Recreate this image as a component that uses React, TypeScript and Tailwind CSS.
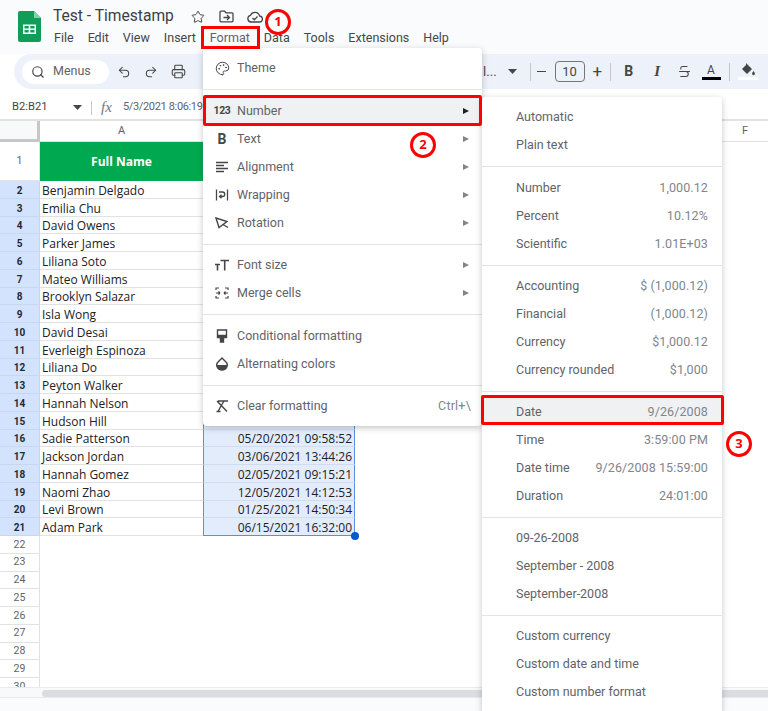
import { Palette, Printer, Redo2, Search, Star, Strikethrough, Undo2 } from "lucide-react";

const menuItems = ["File", "Edit", "View", "Insert", "Format", "Data", "Tools", "Extensions", "Help"];

const rows: { name: string; time?: string }[] = [
  { name: "Benjamin Delgado" },
  { name: "Emilia Chu" },
  { name: "David Owens" },
  { name: "Parker James" },
  { name: "Liliana Soto" },
  { name: "Mateo Williams" },
  { name: "Brooklyn Salazar" },
  { name: "Isla Wong" },
  { name: "David Desai" },
  { name: "Everleigh Espinoza" },
  { name: "Liliana Do" },
  { name: "Peyton Walker" },
  { name: "Hannah Nelson" },
  { name: "Hudson Hill", time: "06/20/2021 16:30:30" },
  { name: "Sadie Patterson", time: "05/20/2021 09:58:52" },
  { name: "Jackson Jordan", time: "03/06/2021 13:44:26" },
  { name: "Hannah Gomez", time: "02/05/2021 09:15:21" },
  { name: "Naomi Zhao", time: "12/05/2021 14:12:53" },
  { name: "Levi Brown", time: "01/25/2021 14:50:34" },
  { name: "Adam Park", time: "06/15/2021 16:32:00" },
];

const emptyRows = [22, 23, 24, 25, 26, 27, 28, 29, 30];

function Arrow({ dark }: { dark?: boolean }) {
  return (
    <svg width="6" height="6" viewBox="0 0 6 6" className="shrink-0">
      <path d="M0 0l6 3-6 3z" fill={dark ? "#202124" : "#80868b"} />
    </svg>
  );
}

function Caret() {
  return (
    <svg width="9" height="5" viewBox="0 0 9 5" className="shrink-0">
      <path d="M0 0h9L4.5 5z" fill="#444746" />
    </svg>
  );
}

function Icon({ d, width = 1.4 }: { d: string; width?: number }) {
  return (
    <svg width="16" height="16" viewBox="0 0 16 16" fill="none" stroke="#444746" strokeWidth={width}>
      <path d={d} />
    </svg>
  );
}

// the menus in the picture have slightly uneven separators, so the gap below can grow
function Divider({ wide }: { wide?: boolean }) {
  return <div className={`mt-[6.5px] h-px bg-[#e3e3e3] ${wide ? "mb-[7.5px]" : "mb-[6.5px]"}`} />;
}

function FormatItem({
  icon,
  label,
  arrow,
  dark,
  hint,
  active,
}: {
  icon: React.ReactNode;
  label: string;
  arrow?: boolean;
  dark?: boolean;
  hint?: string;
  active?: boolean;
}) {
  return (
    <div className={`flex h-[28px] items-center pl-[11px] pr-[11px] ${active ? "bg-[#f0f1f3]" : ""}`}>
      <span className="mr-[7px] flex w-[16px] shrink-0 items-center justify-center">{icon}</span>
      <span className="flex-1 text-[12.5px] text-[#5f6368]">{label}</span>
      {arrow && (
        <span className="pr-[2px]">
          <Arrow dark={dark} />
        </span>
      )}
      {hint && <span className="text-[12.5px] tracking-[0.2px] text-[#80868b]">{hint}</span>}
    </div>
  );
}

function NumberItem({ label, sample, active }: { label: string; sample?: string; active?: boolean }) {
  return (
    <div
      className={`flex h-[28px] items-center justify-between pl-[34px] pr-[14px] text-[12.5px] ${active ? "bg-[#f0f1f3]" : ""}`}
    >
      <span className="text-[#5f6368]">{label}</span>
      {sample && <span className="tracking-[0.1px] text-[#80868b]">{sample}</span>}
    </div>
  );
}

function Callout({ n, className }: { n: number; className: string }) {
  return (
    <div
      className={`absolute flex h-[26px] w-[26px] items-center justify-center rounded-full border-[3px] border-[#ff0000] bg-white font-['Open_Sans',sans-serif] text-[13px] font-bold text-[#ff0000] ${className}`}
    >
      {n}
    </div>
  );
}

export default function App() {
  return (
    <div className="relative flex h-[711px] w-[768px] flex-col overflow-hidden bg-white font-['Roboto',sans-serif]">
      {/* title + menu bar */}
      <div className="flex h-[54px] shrink-0 bg-[#f9fbfd] pl-[18px] pt-[7px]">
        <svg width="23" height="31" viewBox="0 0 23 31" className="mt-[4px] shrink-0">
          <path d="M2 0h14l7 7v22a2 2 0 0 1-2 2H2a2 2 0 0 1-2-2V2a2 2 0 0 1 2-2z" fill="#0f9d58" />
          <path d="M16 0l7 7h-7z" fill="#87ceab" />
          <path d="M5 13.5h13V23H5z" fill="#fff" />
          <path d="M6.5 15h4.2v2.6H6.5zM12.3 15h4.2v2.6h-4.2zM6.5 19h4.2v2.6H6.5zM12.3 19h4.2v2.6h-4.2z" fill="#0f9d58" />
        </svg>
        <div className="ml-[12px] flex flex-col">
          <div className="flex h-[19px] items-center">
            <span className="text-[15.6px] text-[#3c4043]">Test - Timestamp</span>
            <Star size={14} strokeWidth={1.7} className="ml-[17px] text-[#444746]" />
            <svg width="15" height="13" viewBox="0 0 15 13" fill="none" stroke="#444746" strokeWidth="1.3" className="ml-[14px]">
              <path d="M1 2.2c0-.6.4-1 1-1h3.6l1.4 1.6h6c.6 0 1 .4 1 1v7c0 .6-.4 1-1 1H2c-.6 0-1-.4-1-1zM4.5 7.5h6M8 5l2.5 2.5L8 10" />
            </svg>
            <svg width="16" height="12" viewBox="0 0 16 12" fill="none" stroke="#444746" strokeWidth="1.3" className="ml-[13px]">
              <path d="M4 11h8.2a3 3 0 0 0 .4-6A4.8 4.8 0 0 0 3.5 4.3 3.4 3.4 0 0 0 4 11zM5.5 7l1.8 1.8L10.5 5.5" />
            </svg>
          </div>
          <div className="ml-[1px] mt-[4px] flex h-[16px] items-center gap-[14px]">
            {menuItems.map((m) => (
              <span key={m} className={`text-[12.5px] ${m === "Format" ? "text-[#5f6368]" : "text-[#444746]"}`}>
                {m}
              </span>
            ))}
          </div>
        </div>
      </div>

      {/* toolbar */}
      <div className="ml-[14px] flex h-[35px] shrink-0 items-center rounded-l-[18px] bg-[#edf2fa] pl-[8px]">
        <div className="flex h-[24px] w-[87px] items-center rounded-full bg-white pl-[9px]">
          <Search size={14} strokeWidth={2} className="text-[#444746]" />
          <span className="ml-[8px] text-[12.5px] text-[#5f6368]">Menus</span>
        </div>
        <Undo2 size={14} strokeWidth={1.8} className="ml-[8px] text-[#444746]" />
        <Redo2 size={14} strokeWidth={1.8} className="ml-[13px] text-[#444746]" />
        <Printer size={15} strokeWidth={1.7} className="ml-[13px] text-[#444746]" />
        <div className="ml-auto flex items-center pr-[10px]">
          <span className="text-[13px] text-[#444746]">l...</span>
          <span className="ml-[11px]">
            <Caret />
          </span>
          <div className="ml-[13px] h-[18px] w-px bg-[#c7c7c7]" />
          <span className="ml-[6px] h-[1.5px] w-[9px] bg-[#444746]" />
          <span className="ml-[9px] flex h-[21px] w-[30px] items-center justify-center rounded-[4px] border border-[#747775] text-[13px] text-[#444746]">
            10
          </span>
          <span className="ml-[8px] text-[17px] leading-none text-[#444746]">+</span>
          <div className="ml-[8px] h-[18px] w-px bg-[#c7c7c7]" />
          <span className="ml-[13px] text-[14px] font-bold text-[#444746]">B</span>
          <span className="ml-[21px] font-['Liberation_Serif',serif] text-[15px] font-bold italic text-[#444746]">I</span>
          <Strikethrough size={15} strokeWidth={1.7} className="ml-[17px] text-[#444746]" />
          <span className="ml-[9px] flex w-[20px] flex-col items-center text-[12px] leading-[13px] text-[#444746]">
            A
            <span className="h-[3px] w-[19px] bg-black" />
          </span>
          <div className="ml-[8px] h-[18px] w-px bg-[#c7c7c7]" />
          <span className="ml-[8px] flex w-[20px] flex-col items-center">
            <svg width="16" height="13" viewBox="0 0 16 13">
              <path d="M6 0l6 6-5 5-5-5 4-4z M13.5 8c1 1.4 1.4 2 1.4 2.8a1.4 1.4 0 0 1-2.8 0c0-.8.4-1.4 1.4-2.8z" fill="#444746" />
            </svg>
            <span className="mt-[1px] h-[3px] w-[20px] bg-white" />
          </span>
        </div>
      </div>

      {/* formula bar */}
      <div className="mt-[7px] flex h-[25px] shrink-0 items-center border-b-2 border-[#e1e3e1] pl-[12px] text-[11.2px] text-[#444746]">
        <span className="w-[61px]">B2:B21</span>
        <Caret />
        <div className="ml-[9px] h-[14px] w-px bg-[#c7c7c7]" />
        <span className="ml-[9px] w-[22px] font-['Liberation_Serif',serif] text-[15px] italic text-[#747775]">fx</span>
        <span className="text-[11px] tracking-[-0.35px] text-[#5f6368]">5/3/2021 8:06:19</span>
      </div>

      {/* grid */}
      <div className="min-h-0 flex-1 overflow-hidden">
        <div className="flex h-[21px] text-[11px] text-[#5f6368]">
          <div className="w-[40px] shrink-0 border-b-[3px] border-r-[3px] border-[#c7c7c7] bg-[#f8f9fa]" />
          <div className="flex w-[163px] items-center justify-center border-b-[1.5px] border-[#e1e3e1]">A</div>
          <div className="flex-1 border-b-[1.5px] border-[#e1e3e1]" />
          <div className="flex w-[46px] items-center justify-center border-b-[1.5px] border-[#e1e3e1]">F</div>
        </div>
        <div className="flex h-[39px]">
          <div className="flex w-[40px] shrink-0 items-center justify-center border-b border-r border-[#e1e3e1] text-[10.5px] text-[#5f6368]">
            1
          </div>
          <div className="flex w-[163px] items-center justify-center bg-[#00a94f] font-['Open_Sans',sans-serif] text-[12px] font-bold text-white">
            Full Name
          </div>
        </div>
        {rows.map((r, i) => (
          <div key={r.name} className="flex h-[17.75px]">
            <div className="flex w-[40px] shrink-0 items-center justify-center border-b border-r border-[#c9d7ee] bg-[#d3e3fd] pt-[2px] text-[10px] font-bold text-[#1f2937]">
              {i + 2}
            </div>
            <div className="flex w-[163px] items-center border-b border-[#e1e3e1] pl-[2px] pt-[3px] font-['Open_Sans',sans-serif] text-[12px] leading-[14px] text-[#202124]">
              {r.name}
            </div>
            <div
              className={`flex w-[152px] items-center justify-end border-x-[1.5px] border-b border-x-[#5b8fe0] bg-[#e3ecfb] pr-[2px] pt-[3px] font-['Open_Sans',sans-serif] text-[12px] leading-[14px] text-[#202124] ${
                i === rows.length - 1 ? "border-b-[#5b8fe0]" : "border-b-[#cfdcf3]"
              }`}
            >
              {r.time}
            </div>
          </div>
        ))}
        {emptyRows.map((n) => (
          <div key={n} className="flex h-[17.75px]">
            <div className="flex w-[40px] shrink-0 items-center justify-center border-b border-r border-[#e1e3e1] text-[10.5px] text-[#5f6368]">
              {n}
            </div>
          </div>
        ))}
      </div>

      {/* scrollbar */}
      <div className="flex h-[10px] shrink-0 items-end border-t border-[#e8eaed] bg-[#f8f9fa] pl-[42px]">
        <div className="h-[7px] flex-1 rounded-l-[4px] bg-[#dadce0]" />
      </div>
      <div className="h-[14px] shrink-0 border-t border-[#e8eaed] bg-[#f9fbfd]" />

      {/* fill handle */}
      <div className="absolute left-[351px] top-[532px] h-[8px] w-[8px] rounded-full bg-[#0b57d0]" />

      {/* Format menu */}
      <div className="absolute left-[203px] top-[48px] w-[279px] rounded-b-[4px] rounded-tr-[4px] bg-white pt-[6px] shadow-[0_2px_6px_rgba(60,64,67,0.3)]">
        <FormatItem icon={<Palette size={15} strokeWidth={1.6} className="text-[#444746]" />} label="Theme" />
        <Divider wide />
        <FormatItem
          active
          dark
          arrow
          label="Number"
          icon={<span className="text-[10.5px] font-bold tracking-[-0.4px] text-[#444746]">123</span>}
        />
        <FormatItem arrow label="Text" icon={<span className="text-[14px] font-bold leading-none text-[#444746]">B</span>} />
        <FormatItem arrow label="Alignment" icon={<Icon d="M2 3.5h12M2 6.5h8M2 9.5h12M2 12.5h8" />} />
        <FormatItem
          arrow
          label="Wrapping"
          icon={<Icon width={1.3} d="M2.5 2.5v11M13.5 2.5v11M5 5h3.5a2.2 2.2 0 0 1 0 4.5H6M7.5 7.8 5.5 9.5l2 1.8" />}
        />
        <FormatItem arrow label="Rotation" icon={<Icon d="M2 3l11 3.5-8 6zM9 9.5l5 3" />} />
        <Divider />
        <FormatItem arrow label="Font size" icon={<Icon width={1.6} d="M6.5 3.5h8.5M10.7 3.5v10M1 7.5h5M3.5 7.5v6" />} />
        <FormatItem
          arrow
          label="Merge cells"
          icon={<Icon width={1.2} d="M2 5V3h3M14 5V3h-3M2 11v2h3M14 11v2h-3M2 8h4M6 8 4.5 6.5M6 8 4.5 9.5M14 8h-4M10 8l1.5-1.5M10 8l1.5 1.5" />}
        />
        <Divider wide />
        <FormatItem
          label="Conditional formatting"
          icon={
            <svg width="16" height="16" viewBox="0 0 16 16">
              <path d="M3.5 2h9v7.5h-3V14h-3V9.5h-3z" fill="none" stroke="#444746" strokeWidth="1.4" />
              <path d="M3.5 6.8h9v2.7h-9zM6.5 9.5h3V14h-3z" fill="#444746" />
            </svg>
          }
        />
        <FormatItem
          label="Alternating colors"
          icon={
            <svg width="16" height="16" viewBox="0 0 16 16">
              <path d="M8 2 3.8 6.2C1.5 8.5 3 14 8 14s6.5-5.5 4.2-7.8z" fill="none" stroke="#444746" strokeWidth="1.4" />
              <path d="M2.8 9h10.4c0 3-2.2 5-5.2 5s-5.2-2-5.2-5z" fill="#444746" />
            </svg>
          }
        />
        <Divider />
        <FormatItem
          hint="Ctrl+\"
          label="Clear formatting"
          icon={<Icon d="M4 3h10M3 3l10 10.5M10 3 7 8l-3 5.5M2.5 13.5h4" />}
        />
        <div className="h-[6px]" />
      </div>

      {/* Number submenu */}
      <div className="absolute left-[482px] top-[97px] w-[240px] rounded-[4px] bg-white pt-[6px] shadow-[0_2px_6px_rgba(60,64,67,0.3)]">
        <NumberItem label="Automatic" />
        <NumberItem label="Plain text" />
        <Divider wide />
        <NumberItem label="Number" sample="1,000.12" />
        <NumberItem label="Percent" sample="10.12%" />
        <NumberItem label="Scientific" sample="1.01E+03" />
        <Divider />
        <NumberItem label="Accounting" sample="$ (1,000.12)" />
        <NumberItem label="Financial" sample="(1,000.12)" />
        <NumberItem label="Currency" sample="$1,000.12" />
        <NumberItem label="Currency rounded" sample="$1,000" />
        <Divider />
        <NumberItem active label="Date" sample="9/26/2008" />
        <NumberItem label="Time" sample="3:59:00 PM" />
        <NumberItem label="Date time" sample="9/26/2008 15:59:00" />
        <NumberItem label="Duration" sample="24:01:00" />
        <Divider />
        <NumberItem label="09-26-2008" />
        <NumberItem label="September - 2008" />
        <NumberItem label="September-2008" />
        <Divider />
        <NumberItem label="Custom currency" />
        <NumberItem label="Custom date and time" />
        <NumberItem label="Custom number format" />
        <div className="h-[8px]" />
      </div>

      {/* red annotations */}
      <div className="absolute left-[201px] top-[26px] h-[23px] w-[59px] border-[3px] border-[#ff0000]" />
      <div className="absolute left-[203px] top-[95px] h-[31px] w-[279px] rounded-[2px] border-[3px] border-[#ff0000]" />
      <div className="absolute left-[481px] top-[395px] h-[30px] w-[243px] rounded-[2px] border-[3px] border-[#ff0000]" />
      <Callout n={1} className="left-[265px] top-[9px]" />
      <Callout n={2} className="left-[410px] top-[132px]" />
      <Callout n={3} className="left-[726px] top-[431px]" />
    </div>
  );
}
